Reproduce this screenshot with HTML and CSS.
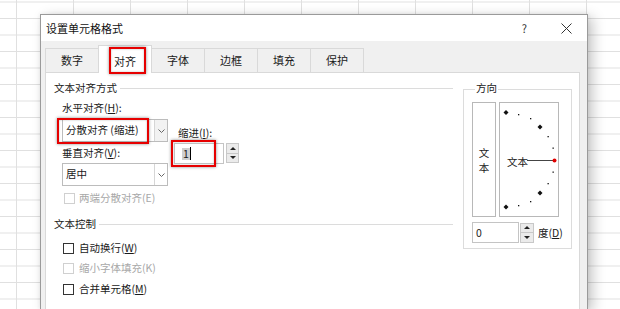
FILE: index.html
```html
<!DOCTYPE html>
<html lang="zh-CN">
<head>
    <meta charset="UTF-8">
    <title>设置单元格格式</title>
    <link rel="stylesheet" href="styles.css">
</head>
<body>
    <div class="dialog">
        <div class="titlebar">
            <span class="title">设置单元格格式</span>
            <span class="help">?</span>
            <svg class="close" width="11" height="11" viewBox="0 0 11 11">
                <path d="M0.5 0.5 L10.5 10.5 M10.5 0.5 L0.5 10.5" stroke="#333" stroke-width="1" fill="none"/>
            </svg>
        </div>
        <div class="dialog-body">
            <div class="tabs">
                <div class="tab">数字</div>
                <div class="tab active">对齐<span class="mark mark-tab"></span></div>
                <div class="tab">字体</div>
                <div class="tab">边框</div>
                <div class="tab">填充</div>
                <div class="tab">保护</div>
            </div>
            <div class="panel">
                <div class="col-left">
                    <div class="section-head">文本对齐方式</div>
                    <div class="align-grid">
                        <div class="combos">
                            <div class="field-label">水平对齐(<u>H</u>):</div>
                            <div class="combo combo-first">
                                <span class="value">分散对齐 (缩进)</span>
                                <span class="drop"><svg width="7" height="4" viewBox="0 0 7 4"><polyline points="0.5,0.5 3.5,3.5 6.5,0.5" stroke="#666" fill="none"/></svg></span>
                                <span class="mark mark-combo"></span>
                            </div>
                            <div class="field-label label-v">垂直对齐(<u>V</u>):</div>
                            <div class="combo combo-second">
                                <span class="value">居中</span>
                                <span class="drop"><svg width="7" height="4" viewBox="0 0 7 4"><polyline points="0.5,0.5 3.5,3.5 6.5,0.5" stroke="#666" fill="none"/></svg></span>
                            </div>
                        </div>
                        <div class="indent">
                            <div class="indent-label">缩进(<u>I</u>):</div>
                            <div class="spin-row">
                                <div class="num-input indent-input"><span class="sel">1</span><span class="caret"></span></div>
                                <div class="spin">
                                    <span class="spin-up"></span>
                                    <span class="spin-down"></span>
                                </div>
                                <span class="mark mark-indent"></span>
                            </div>
                        </div>
                    </div>
                    <div class="check disabled check-first"><span class="box"></span>两端分散对齐(E)</div>
                    <div class="section-head head-second">文本控制</div>
                    <div class="check check-wrap"><span class="box"></span>自动换行(<u>W</u>)</div>
                    <div class="check disabled check-shrink"><span class="box"></span>缩小字体填充(K)</div>
                    <div class="check check-merge"><span class="box"></span>合并单元格(<u>M</u>)</div>
                </div>
                <div class="col-right">
                    <div class="group">
                        <div class="group-title">方向</div>
                        <div class="orient">
                            <div class="vbox"><span>文</span><span>本</span></div>
                            <div class="dial">
                                <svg width="58" height="113" viewBox="0 0 58 113">
                                    <g fill="#111">
                                        <polygon points="6,7 8.5,9.5 6,12 3.5,9.5"/>
                                        <polygon points="40,21.5 42.5,24 40,26.5 37.5,24"/>
                                        <polygon points="40,87.5 42.5,90 40,92.5 37.5,90"/>
                                        <polygon points="6,101.5 8.5,104 6,106.5 3.5,104"/>
                                        <rect x="18" y="11" width="1.3" height="1.3"/>
                                        <rect x="30" y="15" width="1.3" height="1.3"/>
                                        <rect x="47.5" y="33" width="1.3" height="1.3"/>
                                        <rect x="52.5" y="44.5" width="1.3" height="1.3"/>
                                        <rect x="52.5" y="68.5" width="1.3" height="1.3"/>
                                        <rect x="47.5" y="80" width="1.3" height="1.3"/>
                                        <rect x="30" y="98" width="1.3" height="1.3"/>
                                        <rect x="18" y="102" width="1.3" height="1.3"/>
                                    </g>
                                    <text x="7" y="63" class="dial-text">文本</text>
                                    <line x1="27" y1="57.5" x2="53" y2="57.5" stroke="#444" stroke-width="1"/>
                                    <circle cx="54.5" cy="57.5" r="2" fill="#e00000"/>
                                </svg>
                            </div>
                        </div>
                        <div class="deg-row">
                            <div class="num-input deg-input">0</div>
                            <div class="spin deg-spin">
                                <span class="spin-up"></span>
                                <span class="spin-down"></span>
                            </div>
                            <span class="deg-label">度(<u>D</u>)</span>
                        </div>
                    </div>
                </div>
            </div>
        </div>
    </div>
</body>
</html>
```

FILE: styles.css
```css
/* 表格背景 */
body {
    margin: 0;
    height: 309px;
    overflow: hidden;
    font-family: "Noto Sans CJK SC", "Noto Sans", sans-serif;
    font-size: 10.5px;
    color: #1a1a1a;
    background-color: #fff;
    background-image:
        linear-gradient(to right, #e0e0e0 1px, transparent 1px),
        linear-gradient(to bottom, #e0e0e0 1px, transparent 1px);
    background-size: 57px 100%, 100% 16.5px;
    background-position: 16px 0, 0 1.5px;
}
u {
    text-decoration-thickness: 1px;
    text-underline-offset: 1px;
}

/* ダイアログ */
.dialog {
    margin: 14px 0 0 40px;
    width: 546px;
    height: 294px;
    overflow: hidden;
    border: 1px solid #9a9a9a;
    border-bottom: none;
    background: #f0f0f0;
    box-shadow: 5px 3px 12px rgba(0, 0, 0, 0.22), 0 0 4px rgba(0, 0, 0, 0.08);
}
.titlebar {
    height: 26px;
    background: #fff;
    display: flex;
    align-items: center;
}
.title {
    padding-left: 5px;
    font-size: 11px;
    color: #111;
    flex: 1;
    line-height: 16px;
}
.help {
    font-size: 11px;
    color: #333;
    margin-right: 34px;
    line-height: 16px;
}
.close {
    margin-right: 15px;
}
.dialog-body {
    padding: 4px 7px 0 4px;
}

/* タブ */
.tabs {
    display: flex;
    align-items: flex-end;
    height: 27px;
}
.tab {
    position: relative;
    width: 54px;
    height: 24px;
    box-sizing: border-box;
    margin-right: -1px;
    padding-top: 4px;
    border: 1px solid #d9d9d9;
    border-bottom: none;
    background: #f0f0f0;
    text-align: center;
    line-height: 14px;
    font-size: 11px;
}
.tab.active {
    height: 28px;
    margin-bottom: -1px;
    padding-top: 8px;
    background: #fff;
    z-index: 2;
}
.panel {
    height: 240px;
    border: 1px solid #d9d9d9;
    border-bottom: none;
    background: #fff;
    padding: 7px 7px 0 8px;
    display: grid;
    grid-template-columns: 399px 109px;
    column-gap: 10px;
    align-items: start;
}

/* 赤枠 */
.mark {
    position: absolute;
    border: 2px solid #e60000;
    box-shadow: 0 0 3px rgba(0, 0, 0, 0.45), inset 0 0 2px rgba(0, 0, 0, 0.3);
    box-sizing: border-box;
    z-index: 3;
}
.mark-tab {
    left: 10px;
    top: 1px;
    width: 37px;
    height: 27px;
}
.mark-combo {
    left: -6px;
    top: -2px;
    width: 92px;
    height: 26px;
}
.mark-indent {
    left: -3px;
    top: -3px;
    width: 45px;
    height: 27px;
}

/* 左側 */
.section-head {
    display: flex;
    align-items: center;
    line-height: 16px;
    height: 16px;
}
.section-head::after {
    content: "";
    flex: 1;
    height: 1px;
    background: #dcdcdc;
    margin-left: 3px;
}
.head-second {
    margin-top: 10px;
}
.align-grid {
    display: flex;
    margin-top: 4px;
}
.combos {
    margin-left: 8px;
    width: 106px;
}
.field-label {
    line-height: 16px;
}
.label-v {
    margin-top: 3px;
}
.combo {
    position: relative;
    display: flex;
    height: 23px;
    box-sizing: border-box;
    border: 1px solid #bcbcbc;
    background: #fff;
    margin-top: 3px;
}
.combo-second {
    margin-top: 2px;
}
.combo .value {
    flex: 1;
    padding-left: 3px;
    line-height: 20px;
    white-space: nowrap;
}
.combo .drop {
    width: 12px;
    border-left: 1px solid #d6d6d6;
    display: flex;
    align-items: center;
    justify-content: center;
}
.combo-first .drop {
    background: #f2f2f2;
}
.indent {
    margin-left: 6px;
}
.indent-label {
    margin-top: 25px;
    padding-left: 4px;
    line-height: 16px;
}
.spin-row {
    position: relative;
    display: flex;
    margin-top: 2px;
}
.num-input {
    box-sizing: border-box;
    height: 21px;
    border: 1px solid #c4c4c4;
    background: #fff;
    line-height: 18px;
    padding-left: 3px;
    display: flex;
    align-items: center;
}
.indent-input {
    width: 50px;
    padding-left: 7px;
}
.indent-input .sel {
    background: #cfcfcf;
    line-height: 12px;
    padding: 0 1px;
}
.indent-input .caret {
    width: 1px;
    height: 13px;
    background: #000;
}
.spin {
    width: 13px;
    height: 20px;
    box-sizing: border-box;
    margin-left: 2px;
    border: 1px solid #c8c8c8;
    background: #ebebeb;
    display: flex;
    flex-direction: column;
}
.spin span {
    flex: 1;
    display: flex;
    align-items: center;
    justify-content: center;
}
.spin-up {
    border-bottom: 1px solid #c8c8c8;
}
.spin-up::before {
    content: "";
    border-left: 3px solid transparent;
    border-right: 3px solid transparent;
    border-bottom: 3px solid #222;
}
.spin-down::before {
    content: "";
    border-left: 3px solid transparent;
    border-right: 3px solid transparent;
    border-top: 3px solid #222;
}
.check {
    display: flex;
    align-items: center;
    line-height: 16px;
    margin-left: 9px;
}
.check .box {
    width: 11px;
    height: 11px;
    box-sizing: border-box;
    border: 1px solid #333;
    margin-right: 5px;
    background: #fff;
}
.check.disabled {
    color: #a8a8a8;
}
.check.disabled .box {
    border-color: #d0d0d0;
}
.check-first {
    margin-top: 4px;
    margin-left: 10px;
}
.check-first .box {
    margin-right: 4px;
}
.check-wrap {
    margin-top: 8px;
}
.check-shrink {
    margin-top: 4px;
}
.check-merge {
    margin-top: 5px;
}

/* 方向 */
.group {
    margin-top: 9px;
    height: 160px;
    box-sizing: border-box;
    border: 1px solid #dcdcdc;
    padding-left: 8px;
}
.group-title {
    width: max-content;
    margin: -10px 0 0 3px;
    padding: 0 1px;
    background: #fff;
    line-height: 16px;
}
.orient {
    display: flex;
    gap: 3px;
    margin-top: 6px;
}
.vbox {
    width: 24px;
    height: 115px;
    box-sizing: border-box;
    border: 1px solid #b8b8b8;
    display: flex;
    flex-direction: column;
    align-items: center;
    justify-content: center;
    line-height: 15px;
}
.dial {
    width: 60px;
    height: 115px;
    box-sizing: border-box;
    border: 1px solid #b8b8b8;
}
.dial svg {
    display: block;
}
.dial-text {
    font-family: "Noto Sans CJK SC", sans-serif;
    font-size: 10.5px;
    fill: #1a1a1a;
}
.deg-row {
    display: flex;
    align-items: center;
    margin-top: 5px;
}
.deg-input {
    width: 47px;
}
.deg-spin {
    margin-left: 1px;
    width: 14px;
}
.deg-label {
    margin-left: 4px;
    line-height: 16px;
}
```
